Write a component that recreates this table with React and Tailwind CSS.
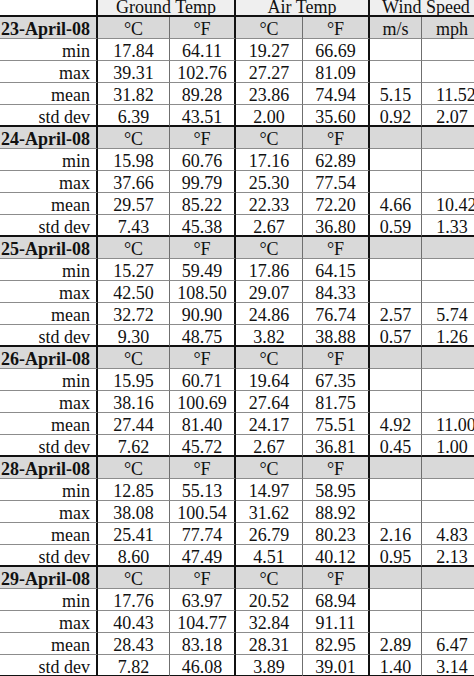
import React from "react";

const days = [
  {
    date: "23-April-08",
    rows: [
      ["min", "17.84", "64.11", "19.27", "66.69", "", ""],
      ["max", "39.31", "102.76", "27.27", "81.09", "", ""],
      ["mean", "31.82", "89.28", "23.86", "74.94", "5.15", "11.52"],
      ["std dev", "6.39", "43.51", "2.00", "35.60", "0.92", "2.07"],
    ],
    units: true,
  },
  {
    date: "24-April-08",
    rows: [
      ["min", "15.98", "60.76", "17.16", "62.89", "", ""],
      ["max", "37.66", "99.79", "25.30", "77.54", "", ""],
      ["mean", "29.57", "85.22", "22.33", "72.20", "4.66", "10.42"],
      ["std dev", "7.43", "45.38", "2.67", "36.80", "0.59", "1.33"],
    ],
  },
  {
    date: "25-April-08",
    rows: [
      ["min", "15.27", "59.49", "17.86", "64.15", "", ""],
      ["max", "42.50", "108.50", "29.07", "84.33", "", ""],
      ["mean", "32.72", "90.90", "24.86", "76.74", "2.57", "5.74"],
      ["std dev", "9.30", "48.75", "3.82", "38.88", "0.57", "1.26"],
    ],
  },
  {
    date: "26-April-08",
    rows: [
      ["min", "15.95", "60.71", "19.64", "67.35", "", ""],
      ["max", "38.16", "100.69", "27.64", "81.75", "", ""],
      ["mean", "27.44", "81.40", "24.17", "75.51", "4.92", "11.00"],
      ["std dev", "7.62", "45.72", "2.67", "36.81", "0.45", "1.00"],
    ],
  },
  {
    date: "28-April-08",
    rows: [
      ["min", "12.85", "55.13", "14.97", "58.95", "", ""],
      ["max", "38.08", "100.54", "31.62", "88.92", "", ""],
      ["mean", "25.41", "77.74", "26.79", "80.23", "2.16", "4.83"],
      ["std dev", "8.60", "47.49", "4.51", "40.12", "0.95", "2.13"],
    ],
  },
  {
    date: "29-April-08",
    rows: [
      ["min", "17.76", "63.97", "20.52", "68.94", "", ""],
      ["max", "40.43", "104.77", "32.84", "91.11", "", ""],
      ["mean", "28.43", "83.18", "28.31", "82.95", "2.89", "6.47"],
      ["std dev", "7.82", "46.08", "3.89", "39.01", "1.40", "3.14"],
    ],
  },
];

const rightBorder = [
  "border-r-2 border-r-[#111]",
  "border-r border-r-[#6f6f6f]",
  "border-r-2 border-r-[#111]",
  "border-r border-r-[#6f6f6f]",
  "border-r-2 border-r-[#111]",
  "border-r border-r-[#6f6f6f]",
  "",
];

function Cell({ col, children, bottom, bg, bold }) {
  const base = "h-[22px] pt-[2px] leading-[20px] whitespace-nowrap overflow-visible";
  const align =
    col === 0 ? "text-right pr-[6px]" : col === 6 ? "text-center px-[14px]" : "text-center";
  const bottomCls =
    bottom === "thick" ? "border-b-2 border-b-[#111]" : "border-b border-b-[#8c8c8c]";
  return (
    <div
      className={`${base} ${align} ${bottomCls} ${rightBorder[col]} ${bg} ${
        bold ? "font-bold" : ""
      }`}
    >
      {children}
    </div>
  );
}

export default function App() {
  return (
    <div className="w-[474px] h-[676px] overflow-hidden bg-white">
      <div
        className="-mt-[5px] w-[482px] grid grid-cols-[98px_72px_66px_67px_67px_52px_60px] text-[18px] text-[#111]"
        style={{ fontFamily: '"Liberation Serif", "Times New Roman", serif' }}
      >
        <div className="h-[22px] border-b-2 border-b-[#111] border-r-2 border-r-[#111] bg-white" />
        <div className="col-span-2 h-[22px] pt-[2px] leading-[20px] text-center whitespace-nowrap border-b-2 border-b-[#111] border-r-2 border-r-[#111] bg-[#efefef]">
          Ground Temp
        </div>
        <div className="col-span-2 h-[22px] pt-[2px] leading-[20px] text-center whitespace-nowrap border-b-2 border-b-[#111] border-r-2 border-r-[#111] bg-[#efefef]">
          Air Temp
        </div>
        <div className="col-span-2 h-[22px] pt-[2px] leading-[20px] text-center whitespace-nowrap border-b-2 border-b-[#111] bg-[#efefef]">
          Wind Speed
        </div>

        {days.map((d) => (
          <React.Fragment key={d.date}>
            {[d.date, "°C", "°F", "°C", "°F", d.units ? "m/s" : "", d.units ? "mph" : ""].map(
              (v, i) => (
                <Cell key={"h" + i} col={i} bg="bg-[#d9d9d9]" bold={i === 0}>
                  {v}
                </Cell>
              )
            )}
            {d.rows.map((r, ri) =>
              r.map((v, i) => (
                <Cell
                  key={ri + "-" + i}
                  col={i}
                  bg="bg-white"
                  bottom={ri === 3 ? "thick" : "thin"}
                >
                  {v}
                </Cell>
              ))
            )}
          </React.Fragment>
        ))}
      </div>
    </div>
  );
}
